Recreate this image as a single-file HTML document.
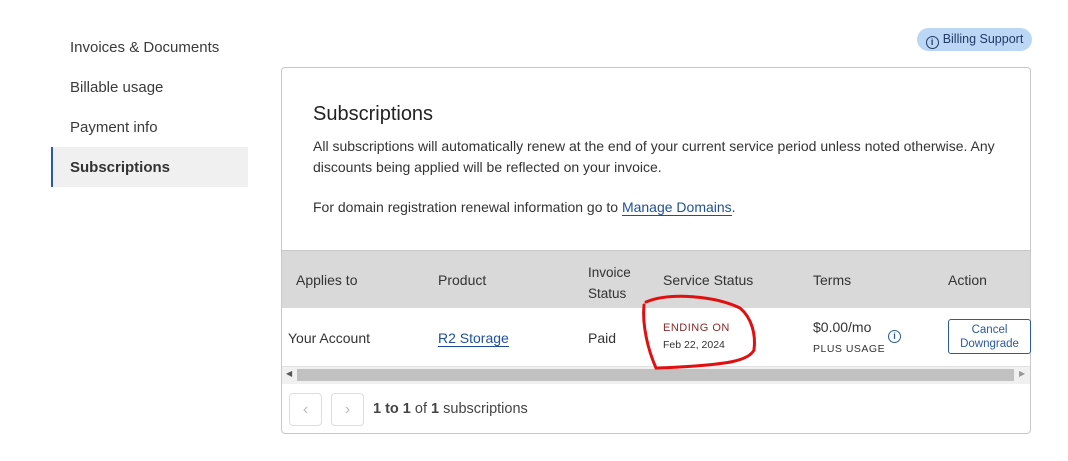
<!DOCTYPE html>
<html><head><style>
body{margin:0;width:1068px;height:461px;background:#fff;font-family:"Liberation Sans",sans-serif;color:#333;position:relative;overflow:hidden}
.a{position:absolute;white-space:nowrap}
.nav{font-size:15px;color:#3a3a3a}
</style></head><body>
<div class="a nav" style="left:70px;top:39px">Invoices &amp; Documents</div>
<div class="a nav" style="left:70px;top:79px">Billable usage</div>
<div class="a nav" style="left:70px;top:119px">Payment info</div>
<div class="a" style="left:51px;top:147px;width:197px;height:40px;background:#f0f0f0;border-left:2px solid #2c5aa0;box-sizing:border-box"></div>
<div class="a nav" style="left:70px;top:159px;font-weight:bold;color:#333">Subscriptions</div>

<div class="a" style="left:917px;top:28px;width:115px;height:23px;border-radius:12px;background:#bcd6f6;font-size:12.5px;color:#1f3b63;line-height:23px;text-align:center"><span style="display:inline-block;width:11px;height:11px;border:1.3px solid #1f3b63;border-radius:50%;font-size:9px;line-height:11px;vertical-align:-2px;margin-right:4px;font-weight:bold">i</span>Billing Support</div>

<div class="a" style="left:281px;top:67px;width:750px;height:367px;border:1px solid #c8c8c8;border-radius:4px;box-sizing:border-box"></div>
<div class="a" style="left:313px;top:103px;font-size:20px;color:#222">Subscriptions</div>
<div class="a" style="left:313px;top:136px;font-size:14px;line-height:21px;color:#333;white-space:normal;width:700px">All subscriptions will automatically renew at the end of your current service period unless noted otherwise. Any discounts being applied will be reflected on your invoice.</div>
<div class="a" style="left:313px;top:199px;font-size:14px">For domain registration renewal information go to <span style="color:#1f4f9a;border-bottom:1px solid #1f4f9a">Manage Domains</span>.</div>

<div class="a" style="left:282px;top:250px;width:748px;height:57px;background:#d9d9d9;border-top:1px solid #c8c8c8"></div>
<div class="a" style="left:296px;top:272px;font-size:14px;color:#333">Applies to</div>
<div class="a" style="left:438px;top:272px;font-size:14px">Product</div>
<div class="a" style="left:588px;top:262px;font-size:13.5px;line-height:21px">Invoice<br>Status</div>
<div class="a" style="left:663px;top:272px;font-size:14px">Service Status</div>
<div class="a" style="left:813px;top:272px;font-size:14px">Terms</div>
<div class="a" style="left:948px;top:272px;font-size:14px">Action</div>

<div class="a" style="left:288px;top:330px;font-size:14px">Your Account</div>
<div class="a" style="left:438px;top:330px;font-size:14px;color:#1f4f9a;border-bottom:1px solid #1f4f9a">R2 Storage</div>
<div class="a" style="left:588px;top:330px;font-size:14px">Paid</div>
<div class="a" style="left:663px;top:322px;font-size:11px;color:#8b2a2a;letter-spacing:.5px">ENDING ON</div>
<div class="a" style="left:663px;top:339px;font-size:10.5px;color:#333">Feb 22, 2024</div>
<div class="a" style="left:813px;top:319px;font-size:14px">$0.00/mo</div>
<div class="a" style="left:813px;top:343px;font-size:10.5px;letter-spacing:.5px">PLUS USAGE</div>
<div class="a" style="left:888px;top:330px;width:11px;height:11px;border:1.3px solid #2c5aa0;border-radius:50%;font-size:9px;line-height:11px;text-align:center;color:#2c5aa0;font-weight:bold">i</div>
<div class="a" style="left:948px;top:319px;width:83px;height:35px;border:1px solid #2c5aa0;border-radius:3px;box-sizing:border-box;font-size:11.5px;color:#2c5aa0;text-align:center;line-height:14px;padding-top:3px">Cancel<br>Downgrade</div>

<div class="a" style="left:282px;top:366px;width:748px;height:17px;background:#f0f0f0;border-top:1px solid #e0e0e0"></div>
<div class="a" style="left:297px;top:369px;width:717px;height:12px;background:#c1c1c1"></div>
<div class="a" style="left:286px;top:369px;font-size:8px;color:#555">◀</div>
<div class="a" style="left:1019px;top:369px;font-size:8px;color:#999">▶</div>

<div class="a" style="left:289px;top:393px;width:33px;height:33px;border:1px solid #ddd;border-radius:4px;box-sizing:border-box;text-align:center;line-height:31px;color:#bbb;font-size:16px">&lsaquo;</div>
<div class="a" style="left:331px;top:393px;width:33px;height:33px;border:1px solid #ddd;border-radius:4px;box-sizing:border-box;text-align:center;line-height:31px;color:#bbb;font-size:16px">&rsaquo;</div>
<div class="a" style="left:373px;top:401px;font-size:14.5px;color:#444"><b>1 to 1</b> of <b>1</b> subscriptions</div>

<svg class="a" style="left:0;top:0" width="1068" height="461"><path d="M646,302 C670,292 715,296 740,308 C752,318 756,335 754,350 C748,362 720,364 695,366 C680,367 665,368 656,368 C648,350 642,325 644,305" fill="none" stroke="#e01010" stroke-width="3" stroke-linecap="round"/></svg>
</body></html>
